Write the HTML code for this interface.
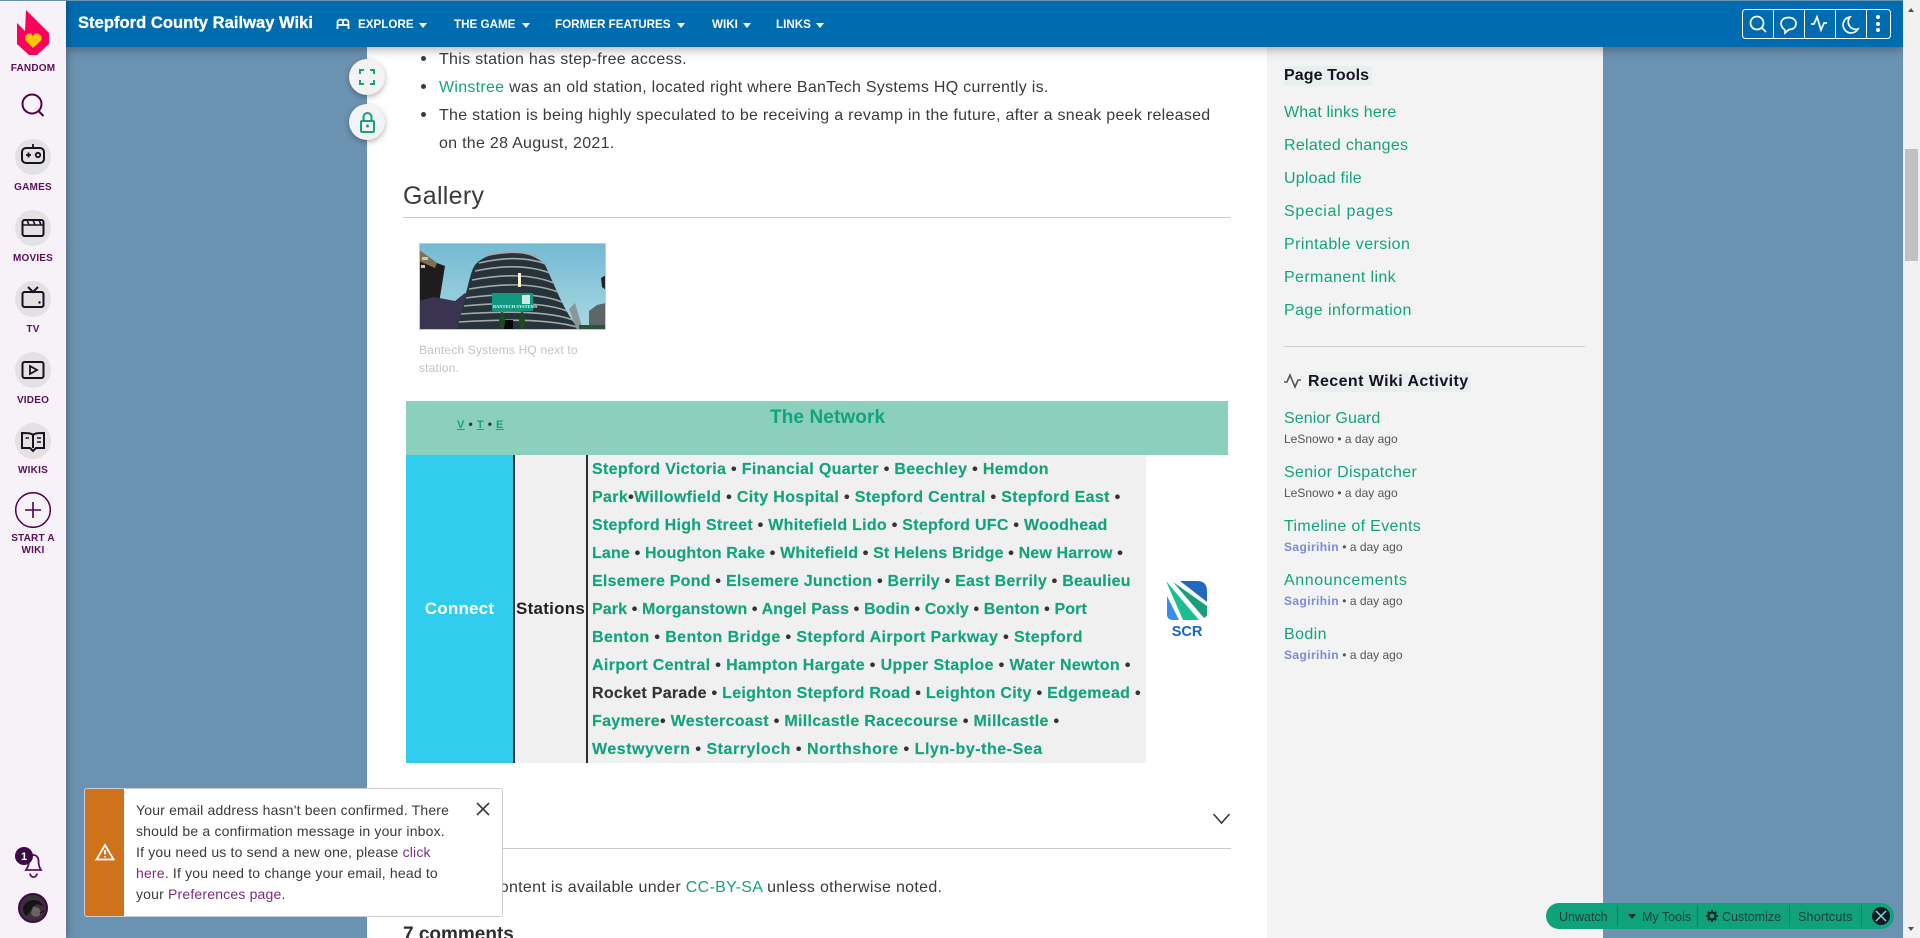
<!DOCTYPE html>
<html><head><meta charset="utf-8"><title>Stepford County Railway Wiki</title>
<style>
html,body{margin:0;padding:0;width:1920px;height:938px;overflow:hidden;background:#6c92b2;font-family:"Liberation Sans",sans-serif}
#w{position:relative;width:1920px;height:938px;overflow:hidden;background:#6c92b2}
.a{position:absolute;white-space:nowrap}
a{color:#13a37c;text-decoration:none}
#c{position:absolute;left:367px;top:0;width:900px;height:938px;background:#fff}
#r{position:absolute;left:1267px;top:0;width:336px;height:938px;background:#f3f3f3}
#sb{position:absolute;left:0;top:0;width:66px;height:938px;background:#f6f2f8;box-shadow:2px 0 6px rgba(0,0,0,.25);z-index:5}
#top{position:absolute;left:66px;top:1px;width:1837px;height:46px;background:#006cb0;box-shadow:0 3px 9px rgba(0,0,0,.3);z-index:4;color:#fff}
.top0{position:absolute;left:0;top:0;width:1920px;height:1px;background:#6c92b2;z-index:6}
.nav{position:absolute;top:16px;font-size:12px;line-height:14px;font-weight:bold;color:#fff;white-space:nowrap;transform:scaleX(.97);transform-origin:left}
.tri{position:absolute;top:22px;width:0;height:0;border-left:4.5px solid transparent;border-right:4.5px solid transparent;border-top:5px solid #fff}
.sl{position:absolute;left:0;width:66px;text-align:center;font-size:10px;line-height:12px;font-weight:bold;color:#5a1058;letter-spacing:.2px}
.ci{position:absolute;left:15px;width:36px;height:36px;border-radius:50%;background:#e2e2e2}
.t{font-size:16px;line-height:28px;color:#3a3a3a;letter-spacing:.28px}
.li{left:592px;font-size:16px;line-height:28px;font-weight:bold;color:#333;letter-spacing:.33px;-webkit-text-stroke:.15px}
.rl{left:1284px;font-size:16px;line-height:20px;letter-spacing:.2px}
.ru{left:1284px;font-size:12px;line-height:14px;color:#555}
.ru b{color:#7b8bd8;letter-spacing:.4px}
.fb{position:absolute;left:349px;width:36px;height:36px;border-radius:50%;background:#f3f3f3;box-shadow:0 2px 6px rgba(0,0,0,.3);z-index:3}
.n{left:136px;font-size:14px;line-height:21px;color:#3a3a3a;letter-spacing:.18px}
.n a{color:#7d2b7d}
.d{position:absolute;top:2px;width:1px;height:22px;background:#0c7c5e}
.bt{position:absolute;top:7px;font-size:12.5px;line-height:14px;color:#1d3b3f;white-space:nowrap}
</style></head><body>
<div id="w">
<div class="top0"></div>
<div id="c"></div>
<div id="r"></div>

<!-- article -->
<div class="a" style="left:421px;top:56px;width:5px;height:5px;border-radius:50%;background:#3a3a3a"></div>
<div class="a" style="left:421px;top:84px;width:5px;height:5px;border-radius:50%;background:#3a3a3a"></div>
<div class="a" style="left:421px;top:112px;width:5px;height:5px;border-radius:50%;background:#3a3a3a"></div>
<div class="a t" style="left:439px;top:46px">This station has step-free access.</div>
<div class="a t" style="left:439px;top:74px"><a>Winstree</a> was an old station, located right where BanTech Systems HQ currently is.</div>
<div class="a t" style="left:439px;top:102px">The station is being highly speculated to be receiving a revamp in the future, after a sneak peek released</div>
<div class="a t" style="left:439px;top:130px">on the 28 August, 2021.</div>
<div class="a" style="left:403px;top:182px;font-size:25px;line-height:28px;color:#3a3a3a;letter-spacing:.3px">Gallery</div>
<div class="a" style="left:403px;top:217px;width:827px;height:1px;background:#c8c8c8"></div>

<svg class="a" style="left:419px;top:243px" width="187" height="87" viewBox="0 0 187 87">
<defs><linearGradient id="sky" x1="0" y1="0" x2="0" y2="1"><stop offset="0" stop-color="#74b9d4"/><stop offset="1" stop-color="#a9d8e0"/></linearGradient></defs>
<rect width="187" height="87" fill="url(#sky)"/>
<path d="M0 7 L18 20 L26 23 L20 60 L0 58Z" fill="#1e1c1c"/>
<path d="M0 7 L18 20 L16 25 L0 18Z" fill="#7f7150"/>
<path d="M3 14 h6 v3 h-6z M2 22 h4 v3 h-4z" fill="#cfc8ae"/>
<path d="M0 87 V58 L15 54 L36 58 L46 50 L50 52 L38 87Z" fill="#3a3450"/>
<path d="M38 87 C46 60 50 30 56 22 C70 5 112 5 126 22 C135 40 145 70 161 87Z" fill="#26333a"/>
<g fill="none" stroke="#a3aaa6" stroke-width="1.600"><path d="M66 13 C85 8 105 8 120 14"/><path d="M60 20 C85 14 108 14 127 21"/><path d="M56 28 C85 22 110 22 131 30"/><path d="M53 37 C85 31 112 31 135 40"/><path d="M50 46 C85 40 115 40 139 49"/><path d="M47 55 C85 50 120 50 143 59"/><path d="M45 63 C85 59 125 59 148 68"/><path d="M42 71 C85 68 130 68 154 77"/><path d="M40 79 C85 76 130 76 158 84"/></g>
<rect x="73" y="50" width="41" height="18" fill="#12977f"/>
<rect x="103" y="52" width="8" height="9" fill="#cdeadf"/>
<text x="74" y="65" font-size="4.500" font-weight="bold" fill="#eef" font-family="Liberation Serif,serif">BANTECH SYSTEMS</text>
<rect x="84" y="77" width="10" height="10" fill="#050a08"/>
<ellipse cx="83" cy="78" rx="3" ry="9" fill="#1d4a24"/><ellipse cx="103" cy="78" rx="3" ry="9" fill="#1d4a24"/>
<rect x="99" y="30" width="3" height="14" fill="#fff6d0"/>
<path d="M150 66 L156 60 L164 87 H158Z" fill="#8b9698"/>
<path d="M170 68 L178 62 L187 60 V87 H170Z" fill="#5c6668"/>
<path d="M160 82 H187 V87 H160Z" fill="#2f5236"/>
<path d="M182 35 L187 32 V47 L183 44Z" fill="#1f2226"/>
<rect x=".5" y=".5" width="186" height="86" fill="none" stroke="#c9c9c9"/>
</svg>
<div class="a" style="left:419px;top:341px;font-size:12px;line-height:18px;color:#c2c2c2;letter-spacing:.18px">Bantech Systems HQ next to<br>station.</div>

<!-- navbox -->
<div class="a" style="left:406px;top:401px;width:822px;height:54px;background:#8ad0bd"></div>
<div class="a" style="left:406px;top:455px;width:107px;height:308px;background:#30cdee"></div>
<div class="a" style="left:513px;top:455px;width:2px;height:308px;background:#2a2f36"></div>
<div class="a" style="left:515px;top:455px;width:71px;height:308px;background:#f0f0f0"></div>
<div class="a" style="left:586px;top:455px;width:2px;height:308px;background:#2a2f36"></div>
<div class="a" style="left:588px;top:455px;width:558px;height:308px;background:#f0f0f0"></div>
<div class="a" style="left:457px;top:417px;font-size:12px;line-height:14px;font-weight:bold;color:#13a37c;letter-spacing:.4px"><span style="text-decoration:underline;font-size:11px">V</span> <span style="color:#333">•</span> <span style="text-decoration:underline;font-size:11px">T</span> <span style="color:#333">•</span> <span style="text-decoration:underline;font-size:11px">E</span></div>
<div class="a" style="left:770px;top:407px;font-size:19px;line-height:22px;font-weight:bold;color:#13a37c;letter-spacing:.1px">The Network</div>
<div class="a" style="left:406px;top:599px;width:107px;text-align:center;font-size:17px;line-height:20px;font-weight:bold;color:#fff;letter-spacing:.2px">Connect</div>
<div class="a" style="left:516px;top:599px;font-size:17px;line-height:20px;font-weight:bold;color:#222;letter-spacing:.25px">Stations</div>
<div class="a li" style="top:456px"><a>Stepford Victoria</a> • <a>Financial Quarter</a> • <a>Beechley</a> • <a>Hemdon</a></div>
<div class="a li" style="top:484px;letter-spacing:.35px"><a>Park</a>•<a>Willowfield</a> • <a>City Hospital</a> • <a>Stepford Central</a> • <a>Stepford East</a> •</div>
<div class="a li" style="top:512px;letter-spacing:.27px"><a>Stepford High Street</a> • <a>Whitefield Lido</a> • <a>Stepford UFC</a> • <a>Woodhead</a></div>
<div class="a li" style="top:540px;letter-spacing:.155px"><a>Lane</a> • <a>Houghton Rake</a> • <a>Whitefield</a> • <a>St Helens Bridge</a> • <a>New Harrow</a> •</div>
<div class="a li" style="top:568px;letter-spacing:.24px"><a>Elsemere Pond</a> • <a>Elsemere Junction</a> • <a>Berrily</a> • <a>East Berrily</a> • <a>Beaulieu</a></div>
<div class="a li" style="top:596px;letter-spacing:.12px"><a>Park</a> • <a>Morganstown</a> • <a>Angel Pass</a> • <a>Bodin</a> • <a>Coxly</a> • <a>Benton</a> • <a>Port</a></div>
<div class="a li" style="top:624px;letter-spacing:.4px"><a>Benton</a> • <a>Benton Bridge</a> • <a>Stepford Airport Parkway</a> • <a>Stepford</a></div>
<div class="a li" style="top:652px;letter-spacing:.37px"><a>Airport Central</a> • <a>Hampton Hargate</a> • <a>Upper Staploe</a> • <a>Water Newton</a> •</div>
<div class="a li" style="top:680px;letter-spacing:.28px">Rocket Parade • <a>Leighton Stepford Road</a> • <a>Leighton City</a> • <a>Edgemead</a> •</div>
<div class="a li" style="top:708px;letter-spacing:.31px"><a>Faymere</a>• <a>Westercoast</a> • <a>Millcastle Racecourse</a> • <a>Millcastle</a> •</div>
<div class="a li" style="top:736px;letter-spacing:.53px"><a>Westwyvern</a> • <a>Starryloch</a> • <a>Northshore</a> • <a>Llyn-by-the-Sea</a></div>

<svg class="a" style="left:1163px;top:580px" width="46" height="62" viewBox="0 0 46 62">
<path d="M17 1 H34 Q44 1 44 11 V22Z" fill="#2268c0"/>
<path d="M10 2 L44 26 V36 Q42 37 41 38Z" fill="#18a07c"/>
<path d="M3 1 L36 40 H20Z" fill="#1dbd92"/>
<path d="M4 16 L16 40 H10 Q4 40 4 34Z" fill="#3a8bf0"/>
<text x="24" y="56" text-anchor="middle" font-size="14.500" font-weight="bold" fill="#1765bd">SCR</text>
</svg>

<svg class="a" style="left:1212px;top:812px" width="20" height="14"><path d="M1.500 2 L9.500 11 L17.500 2" fill="none" stroke="#3a3a3a" stroke-width="1.600"/></svg>
<div class="a" style="left:403px;top:848px;width:828px;height:1px;background:#c8c8c8"></div>
<div class="a t" style="left:403px;top:874px;letter-spacing:.31px">Community content is available under <a>CC-BY-SA</a> unless otherwise noted.</div>
<div class="a" style="left:403px;top:924px;font-size:19px;line-height:22px;font-weight:bold;color:#2e2e2e">7 comments</div>

<!-- rail -->
<div class="a" style="left:1284px;top:66px;font-size:16px;line-height:20px;font-weight:bold;color:#1a1220;background:#e6f1ef;padding-right:3px;letter-spacing:.1px">Page Tools</div>
<a class="a rl" style="top:103px;letter-spacing:.14px">What links here</a>
<a class="a rl" style="top:136px;letter-spacing:.28px">Related changes</a>
<a class="a rl" style="top:169px">Upload file</a>
<a class="a rl" style="top:202px;letter-spacing:.7px">Special pages</a>
<a class="a rl" style="top:235px;letter-spacing:.42px">Printable version</a>
<a class="a rl" style="top:268px;letter-spacing:.38px">Permanent link</a>
<a class="a rl" style="top:301px;letter-spacing:.43px">Page information</a>
<div class="a" style="left:1284px;top:346px;width:301px;height:1px;background:#cfcfcf"></div>
<svg class="a" style="left:1283px;top:372px" width="20" height="18" viewBox="0 0 20 18"><path d="M1 10 H4 L7 3 L12 15 L15 8 H18" fill="none" stroke="#555" stroke-width="1.600"/></svg>
<div class="a" style="left:1308px;top:372px;font-size:16px;line-height:20px;font-weight:bold;color:#1a1220;background:#e9eeee;padding-right:2px;letter-spacing:.42px">Recent Wiki Activity</div>
<a class="a rl" style="top:409px;letter-spacing:.1px">Senior Guard</a><div class="a ru" style="top:432px">LeSnowo • a day ago</div>
<a class="a rl" style="top:463px;letter-spacing:.35px">Senior Dispatcher</a><div class="a ru" style="top:486px">LeSnowo • a day ago</div>
<a class="a rl" style="top:517px;letter-spacing:.34px">Timeline of Events</a><div class="a ru" style="top:540px"><b>Sagirihin</b> • a day ago</div>
<a class="a rl" style="top:571px;letter-spacing:.6px">Announcements</a><div class="a ru" style="top:594px"><b>Sagirihin</b> • a day ago</div>
<a class="a rl" style="top:625px;letter-spacing:.4px">Bodin</a><div class="a ru" style="top:648px"><b>Sagirihin</b> • a day ago</div>

<!-- floating -->
<div class="fb" style="top:59px"><svg width="36" height="36" viewBox="0 0 36 36"><path d="M11 15 V11 H15 M21 11 H25 V15 M25 21 V25 H21 M15 25 H11 V21" fill="none" stroke="#13a37c" stroke-width="2"/></svg></div>
<div class="fb" style="top:104px"><svg width="36" height="36" viewBox="0 0 36 36"><rect x="12" y="17" width="13" height="11" rx="1" fill="none" stroke="#13a37c" stroke-width="2"/><path d="M14.500 17 V13 a4 4 0 0 1 8 0 V17" fill="none" stroke="#13a37c" stroke-width="2"/><circle cx="18.500" cy="22" r="1.500" fill="#13a37c"/></svg></div>

<!-- top bar -->
<div id="top">
 <div class="a" style="left:12px;top:12px;font-size:16.500px;line-height:20px;font-weight:bold;color:#fff;-webkit-text-stroke:.3px #fff;letter-spacing:.05px">Stepford County Railway Wiki</div>
 <svg class="a" style="left:270px;top:16px" width="14" height="14" viewBox="0 0 14 14"><path d="M1.500 12 V6 a3 3 0 0 1 5.500-2 a3 3 0 0 1 5.500 2 V12 M1.500 8 H12.500 M7 4 V8" fill="none" stroke="#fff" stroke-width="1.800"/></svg>
 <div class="nav" style="left:292px">EXPLORE</div><div class="tri" style="left:353px"></div>
 <div class="nav" style="left:388px">THE GAME</div><div class="tri" style="left:456px"></div>
 <div class="nav" style="left:489px">FORMER FEATURES</div><div class="tri" style="left:611px"></div>
 <div class="nav" style="left:646px">WIKI</div><div class="tri" style="left:677px"></div>
 <div class="nav" style="left:710px">LINKS</div><div class="tri" style="left:750px"></div>
 <svg class="a" style="left:1676px;top:8px" width="149" height="30" viewBox="0 0 149 30">
  <rect x=".5" y=".5" width="148" height="29" rx="3" fill="none" stroke="#fff"/>
  <path d="M31.500 0 V30 M62.500 0 V30 M93.500 0 V30 M124.500 0 V30" stroke="#fff"/>
  <g fill="none" stroke="#fff" stroke-width="1.700">
  <circle cx="15" cy="14" r="6.500"/><path d="M20 19 L24 23"/>
  <path d="M43 21 l0 3 l4-3.500 c5 0 7-3 7-6 c0-3.500-3-6-7.500-6 s-7.500 2.500-7.500 6 c0 3 2 5 4 6.500z"/>
  <path d="M69 15 H72 L75 8 L79 21 L82 14 H85"/>
  <path d="M108 8 a8 8 0 1 0 8 12 a7.500 7.500 0 0 1 -8 -12z"/>
  </g>
  <circle cx="136" cy="8" r="2" fill="#fff"/><circle cx="136" cy="15" r="2" fill="#fff"/><circle cx="136" cy="21" r="2" fill="#fff"/>
 </svg>
</div>

<!-- sidebar -->
<div id="sb">
 <svg class="a" style="left:0;top:0" width="66" height="125" viewBox="0 0 66 125">
  <path d="M26 10 L49 33 V44 L37 55 H29 L17 44 V23 L25 31Z" fill="#fa005a"/>
  <path d="M33 48 L25 40 V36 L28 33.500 H31 L33 36 L35 33.500 H38 L41.500 36 V40Z" fill="#ffc500"/>
  <circle cx="32" cy="104" r="9.500" fill="none" stroke="#520044" stroke-width="2"/><path d="M38.500 111 L43.500 116" stroke="#520044" stroke-width="2"/>
 </svg>
 <div class="sl" style="top:63px">FANDOM</div>
 <div class="ci" style="top:139px"></div>
 <svg class="a" style="left:15px;top:139px" width="36" height="36" viewBox="0 0 36 36"><rect x="7" y="9" width="22" height="15" rx="4" fill="none" stroke="#1b0f24" stroke-width="2"/><path d="M18 9 V5 M11 16 H16 M13.500 13.500 V18.500" stroke="#1b0f24" stroke-width="1.800"/><circle cx="23" cy="16" r="2.200" fill="none" stroke="#1b0f24" stroke-width="1.800"/></svg>
 <div class="sl" style="top:182px">GAMES</div>
 <div class="ci" style="top:210px"></div>
 <svg class="a" style="left:15px;top:210px" width="36" height="36" viewBox="0 0 36 36"><rect x="7.500" y="10" width="21" height="16" rx="2" fill="none" stroke="#1b0f24" stroke-width="2"/><path d="M7.500 15 H28.500 M12 10 L14 15 M18 10 L20 15 M24 10 L26 15" stroke="#1b0f24" stroke-width="1.600"/></svg>
 <div class="sl" style="top:253px">MOVIES</div>
 <div class="ci" style="top:281px"></div>
 <svg class="a" style="left:15px;top:281px" width="36" height="36" viewBox="0 0 36 36"><rect x="7.500" y="11" width="21" height="15" rx="2" fill="none" stroke="#1b0f24" stroke-width="2"/><path d="M13 6 L18 11 L23 6" fill="none" stroke="#1b0f24" stroke-width="2"/><circle cx="24.500" cy="21.500" r="1.200" fill="#1b0f24"/></svg>
 <div class="sl" style="top:324px">TV</div>
 <div class="ci" style="top:352px"></div>
 <svg class="a" style="left:15px;top:352px" width="36" height="36" viewBox="0 0 36 36"><rect x="7.500" y="10" width="21" height="16" rx="2" fill="none" stroke="#1b0f24" stroke-width="2"/><path d="M15 14 L22 18 L15 22Z" fill="none" stroke="#1b0f24" stroke-width="1.800"/></svg>
 <div class="sl" style="top:395px">VIDEO</div>
 <div class="ci" style="top:423px"></div>
 <svg class="a" style="left:15px;top:423px" width="36" height="36" viewBox="0 0 36 36"><path d="M18 12 C16 10 12 10 7 10 V25 H15 L18 28 L21 25 H29 V10 C24 10 20 10 18 12Z M18 12 V25" fill="none" stroke="#1b0f24" stroke-width="2"/><path d="M10.500 15 H14 M22 15 H26 M22 19 H26" stroke="#1b0f24" stroke-width="1.600"/></svg>
 <div class="sl" style="top:465px">WIKIS</div>
 <svg class="a" style="left:15px;top:492px" width="36" height="36" viewBox="0 0 36 36"><circle cx="18" cy="18" r="17.300" fill="none" stroke="#520044" stroke-width="1.500"/><path d="M18 10 V26 M10 18 H26" stroke="#520044" stroke-width="1.600"/></svg>
 <div class="sl" style="top:533px">START A<br>WIKI</div>
 <svg class="a" style="left:14px;top:846px" width="30" height="34" viewBox="0 0 30 34"><path d="M12 24 H27 C25 21 24.500 18 24.500 15 C24.500 11 22 9 19.500 9 C17 9 15 11 15 15 C15 18 14 21 12 24Z" fill="none" stroke="#5a1058" stroke-width="1.800"/><path d="M16 27.500 a3.500 3.500 0 0 0 7 0" fill="none" stroke="#5a1058" stroke-width="1.800"/><circle cx="10" cy="10" r="9" fill="#3b0a45"/><text x="10" y="14" text-anchor="middle" font-size="11" font-weight="bold" fill="#fff">1</text></svg>
 <svg class="a" style="left:18px;top:893px" width="30" height="30" viewBox="0 0 30 30"><circle cx="15" cy="15" r="14" fill="#3b2f3a" stroke="#3b0a45" stroke-width="2"/><path d="M5 15 C8 5 22 4 26 14 C22 10 16 11 14 15 C12 20 9 22 8 23 C6 21 5 18 5 15Z" fill="#15121a"/><path d="M15 14 C20 13 24 17 22 22 C19 25 14 24 13 20Z" fill="#6b6168"/><path d="M20 8 L24 12 M22 20 L26 18" stroke="#15121a" stroke-width="1.500"/></svg>
</div>

<!-- notification -->
<div class="a" style="left:84px;top:788px;width:419px;height:129px;background:#fff;border:1px solid #c6cfd8;border-radius:3px;box-sizing:border-box;z-index:7;overflow:hidden">
 <div class="a" style="left:0;top:0;width:39px;height:127px;background:#cf721c"></div>
 <svg class="a" style="left:10px;top:54px" width="20" height="18" viewBox="0 0 20 18"><path d="M10 2 L18.500 16.500 H1.500Z" fill="none" stroke="#fff" stroke-width="1.800"/><path d="M10 7 V11.500 M10 13 V14.500" stroke="#fff" stroke-width="1.800"/></svg>
 <svg class="a" style="left:390px;top:12px" width="16" height="16" viewBox="0 0 16 16"><path d="M2 2 L14 14 M14 2 L2 14" stroke="#3a3a3a" stroke-width="1.600"/></svg>
</div>
<div class="a n" style="top:800px;z-index:8">Your email address hasn't been confirmed. There<br>should be a confirmation message in your inbox.<br>If you need us to send a new one, please <a>click</a><br><a>here</a>. If you need to change your email, head to<br>your <a>Preferences page</a>.</div>

<!-- bottom toolbar -->
<div class="a" style="left:1546px;top:903px;width:348px;height:26px;background:#10a37b;border-radius:13px;z-index:7">
 <div class="bt" style="left:13px">Unwatch</div><div class="d" style="left:71px"></div>
 <div class="a" style="left:82px;top:11px;width:0;height:0;border-left:4px solid transparent;border-right:4px solid transparent;border-top:5px solid #14262e"></div>
 <div class="bt" style="left:96px">My Tools</div><div class="d" style="left:151px"></div>
 <svg class="a" style="left:160px;top:7px" width="12" height="12" viewBox="0 0 12 12"><circle cx="6" cy="6" r="3.500" fill="none" stroke="#14262e" stroke-width="2.200"/><path d="M6 0 V2.500 M6 9.500 V12 M0 6 H2.500 M9.500 6 H12 M1.800 1.800 L3.500 3.500 M8.500 8.500 L10.200 10.200 M1.800 10.200 L3.500 8.500 M8.500 3.500 L10.200 1.800" stroke="#14262e" stroke-width="2"/></svg>
 <div class="bt" style="left:176px">Customize</div><div class="d" style="left:243px"></div>
 <div class="bt" style="left:252px;letter-spacing:.2px">Shortcuts</div><div class="d" style="left:315px"></div>
 <svg class="a" style="left:326px;top:4px" width="18" height="18" viewBox="0 0 18 18"><circle cx="9" cy="9" r="9" fill="#0e1a2b"/><path d="M4 4 L14 14 M14 4 L4 14" stroke="#8fd7c1" stroke-width="1.500"/></svg>
</div>

<!-- scrollbar -->
<div class="a" style="left:1903px;top:0;width:17px;height:938px;background:#f1f1f1;z-index:6"></div>
<div class="a" style="left:1905px;top:149px;width:13px;height:112px;background:#c1c1c1;z-index:7"></div>
<div class="a" style="left:1908px;top:8px;width:0;height:0;border-left:3.500px solid transparent;border-right:3.500px solid transparent;border-bottom:4px solid #505050;z-index:7"></div>
<div class="a" style="left:1908px;top:927px;width:0;height:0;border-left:3.500px solid transparent;border-right:3.500px solid transparent;border-top:4px solid #505050;z-index:7"></div>
</div>
</body></html>
